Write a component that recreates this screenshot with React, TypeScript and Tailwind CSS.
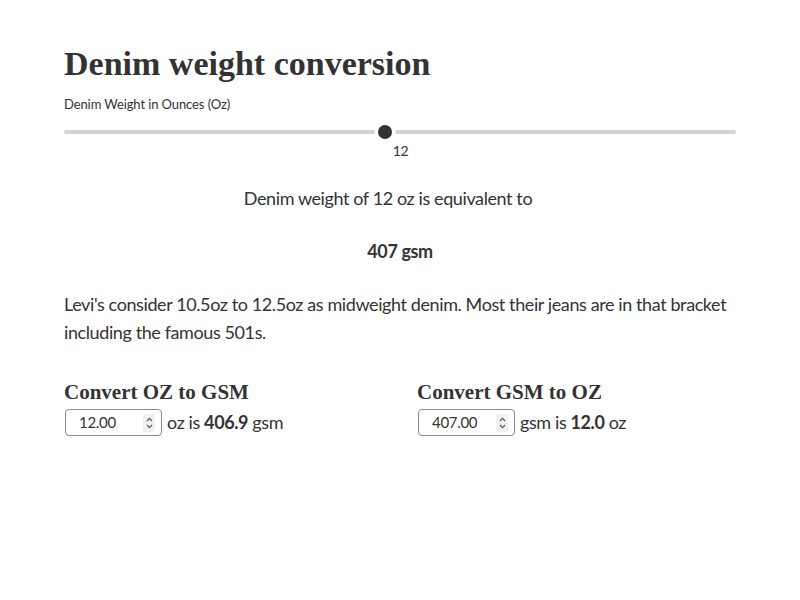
import { useState } from "react";

const OZ_TO_GSM = 33.906;
const MIN_OZ = 1;
const MAX_OZ = 24;

const Spinner = () => (
  <span className="flex h-[18px] w-[12px] flex-col items-center justify-center rounded-[2px] bg-[#f0f0f0] text-[#555]">
    <svg width="7" height="5" viewBox="0 0 7 5" fill="none" stroke="currentColor" strokeWidth="1.1">
      <path d="M1 4 3.5 1.4 6 4" />
    </svg>
    <svg width="7" height="5" viewBox="0 0 7 5" fill="none" stroke="currentColor" strokeWidth="1.1" className="mt-[2px]">
      <path d="M1 1 3.5 3.6 6 1" />
    </svg>
  </span>
);

const NumberBox = ({ value }: { value: string }) => (
  <div className="ml-px flex h-[27px] w-[97px] items-center justify-between rounded-[4px] border border-[#8a8a8a] bg-white pl-[13px] pr-[6px]">
    <span className="text-[15px] tracking-[-0.3px] text-[#333]">{value}</span>
    <Spinner />
  </div>
);

export default function App() {
  const [oz] = useState(12);
  const gsm = Math.round(oz * OZ_TO_GSM);
  const pct = ((oz - MIN_OZ) / (MAX_OZ - MIN_OZ)) * 100;

  return (
    <div className="min-h-screen bg-white text-[#333] font-['Lato','Open_Sans',sans-serif] tracking-[-0.4px]">
      <div className="mx-auto w-[672px] pt-[40px]">
        <h1 className="font-['Liberation_Serif',serif] text-[34px] font-bold leading-[48px] tracking-normal text-[#333]">
          Denim weight conversion
        </h1>
        <label className="mt-[7px] block text-[13px] leading-[18px] tracking-[-0.1px]">Denim Weight in Ounces (Oz)</label>

        <div className="relative mt-[12px] h-[14px]">
          <div className="absolute left-0 top-[5px] h-[4px] rounded-full bg-[#d3d3d3]" style={{ width: `calc(${pct}% - 10px)` }} />
          <div className="absolute right-0 top-[5px] h-[4px] rounded-full bg-[#d3d3d3]" style={{ left: `calc(${pct}% + 10px)` }} />
          <div className="absolute top-0 h-[14px] w-[14px] -translate-x-1/2 rounded-full bg-[#333]" style={{ left: `${pct}%` }} />
          <span className="absolute top-[17px] -translate-x-1/2 text-[14px] leading-[18px]" style={{ left: `calc(${pct}% + 15px)` }}>
            {oz}
          </span>
        </div>

        <p className="mt-[45px] pr-[24px] text-center text-[18px] leading-[28px]">
          Denim weight of {oz} oz is equivalent to
        </p>
        <p className="mt-[25px] text-center text-[18px] font-bold leading-[28px]">{gsm} gsm</p>

        <p className="mt-[25px] text-[18px] leading-[28px]">
          Levi's consider 10.5oz to 12.5oz as midweight denim. Most their jeans are in that bracket including the famous 501s.
        </p>

        <div className="mt-[32px] grid grid-cols-2 gap-[34px]">
          <div>
            <h2 className="font-['Liberation_Serif',serif] text-[21px] font-bold leading-[28px] tracking-normal">Convert OZ to GSM</h2>
            <div className="mt-[3px] flex items-center gap-[5px] text-[18px]">
              <NumberBox value="12.00" />
              <span>
                oz is <b>{(oz * OZ_TO_GSM).toFixed(1)}</b> gsm
              </span>
            </div>
          </div>
          <div>
            <h2 className="font-['Liberation_Serif',serif] text-[21px] font-bold leading-[28px] tracking-normal">Convert GSM to OZ</h2>
            <div className="mt-[3px] flex items-center gap-[5px] text-[18px]">
              <NumberBox value="407.00" />
              <span>
                gsm is <b>{(407 / OZ_TO_GSM).toFixed(1)}</b> oz
              </span>
            </div>
          </div>
        </div>
      </div>
    </div>
  );
}
